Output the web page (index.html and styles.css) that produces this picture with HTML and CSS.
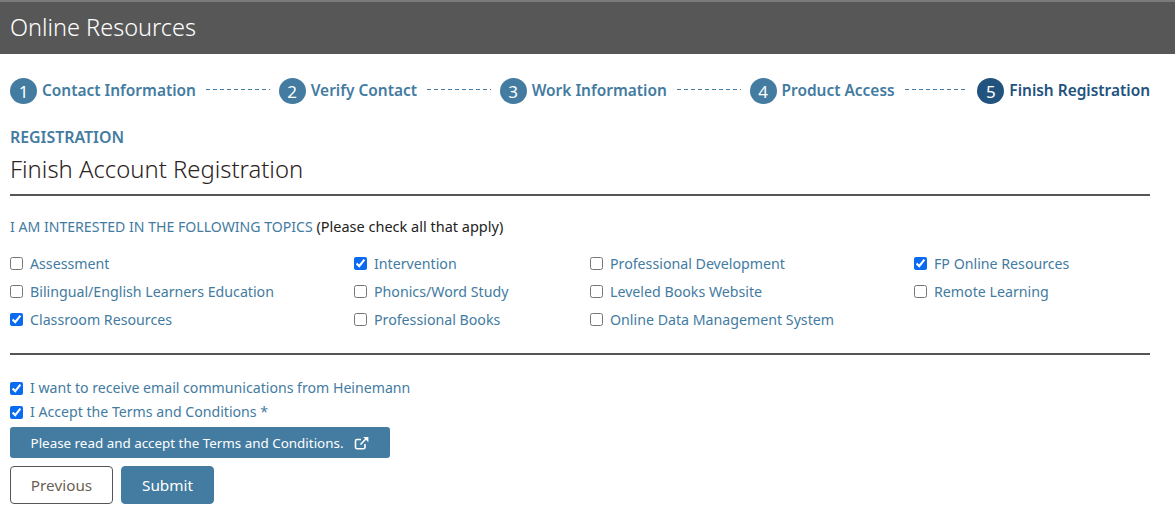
FILE: index.html
```html
<!DOCTYPE html>
<html lang="en">
<head>
<meta charset="utf-8">
<title>Online Resources</title>
<link rel="stylesheet" href="styles.css">
</head>
<body>
<header class="banner"><h1 class="banner-title">Online Resources</h1></header>
<main class="page">
  <ol class="steps">
    <li class="step"><span class="step-num">1</span><span class="step-label">Contact Information</span></li>
    <li class="dots"></li>
    <li class="step"><span class="step-num">2</span><span class="step-label">Verify Contact</span></li>
    <li class="dots"></li>
    <li class="step"><span class="step-num">3</span><span class="step-label">Work Information</span></li>
    <li class="dots"></li>
    <li class="step"><span class="step-num">4</span><span class="step-label">Product Access</span></li>
    <li class="dots"></li>
    <li class="step step-current"><span class="step-num">5</span><span class="step-label">Finish Registration</span></li>
  </ol>
  <div class="eyebrow">REGISTRATION</div>
  <h2 class="title">Finish Account Registration</h2>
  <p class="topics-head"><span class="topics-caps">I AM INTERESTED IN THE FOLLOWING TOPICS</span> (Please check all that apply)</p>
  <div class="topics">
    <label class="check"><input type="checkbox">Assessment</label>
    <label class="check"><input type="checkbox" checked>Intervention</label>
    <label class="check"><input type="checkbox">Professional Development</label>
    <label class="check"><input type="checkbox" checked>FP Online Resources</label>
    <label class="check"><input type="checkbox">Bilingual/English Learners Education</label>
    <label class="check"><input type="checkbox">Phonics/Word Study</label>
    <label class="check"><input type="checkbox">Leveled Books Website</label>
    <label class="check"><input type="checkbox">Remote Learning</label>
    <label class="check"><input type="checkbox" checked>Classroom Resources</label>
    <label class="check"><input type="checkbox">Professional Books</label>
    <label class="check"><input type="checkbox">Online Data Management System</label>
  </div>
  <div class="consent">
    <label class="check"><input type="checkbox" checked>I want to receive email communications from Heinemann</label>
    <label class="check"><input type="checkbox" checked>I Accept the Terms and Conditions *</label>
  </div>
  <a class="terms-btn" href="#">Please read and accept the Terms and Conditions.
    <svg class="ext-icon" width="15" height="14" viewBox="0 0 15 14" fill="none" stroke="#fff" stroke-width="1.6"><path d="M11 8v3.2a1.5 1.5 0 0 1-1.5 1.5H3a1.5 1.5 0 0 1-1.5-1.5V5A1.5 1.5 0 0 1 3 3.5h4"/><path d="M6.5 8.5 13 1.8"/><path d="M9.2 1H14.4v5.2z" fill="#fff" stroke="none"/></svg>
  </a>
  <div class="actions">
    <button class="btn btn-outline" type="button">Previous</button>
    <button class="btn btn-primary" type="button">Submit</button>
  </div>
</main>
</body>
</html>
```
FILE: styles.css
```css
* { box-sizing: border-box; }
html, body { margin: 0; padding: 0; background: #fff; }
body { font-family: "Noto Sans", "Open Sans", sans-serif; color: #222; overflow: hidden; }
.banner { height: 54px; background: #575757; border-top: 2px solid #7a7a7a; display: flex; align-items: center; padding: 0 10px; }
.banner-title { margin: 0; font-size: 23.5px; font-weight: 350; color: #fff; line-height: 1; }
.page { width: 1150px; padding: 0 0 0 10px; }
.steps { list-style: none; margin: 0; padding: 24px 0 0; display: flex; align-items: center; }
.step { display: flex; align-items: center; gap: 5px; flex: none; }
.step-num { width: 27px; height: 26px; border-radius: 50%; background: #437ba1; color: #fff; font-size: 17px; display: flex; align-items: center; justify-content: center; line-height: 1; }
.step-label { font-size: 15.45px; font-weight: 600; color: #437ba1; line-height: 22px; margin-top: -2px; }
.step-current .step-num { background: #22527e; }
.step-current .step-label { color: #22527e; }
.dots { flex: 1; height: 1px; margin: -3px 9px 0 10px; background: repeating-linear-gradient(to right, #437ba1 0 4px, transparent 4px 7px); }
.eyebrow { font-size: 15.9px; font-weight: 600; color: #437ba1; line-height: 22px; margin-top: 22px; }
.title { margin: 6px 0 0; font-size: 23.85px; font-weight: 350; color: #2b2222; line-height: 30px; padding-bottom: 10px; border-bottom: 2px solid #555; }
.topics-head { margin: 20px 0 0; font-size: 14.5px; line-height: 20px; color: #222; }
.topics-caps { color: #437ba1; font-size: 14.1px; }
.topics { display: grid; grid-template-columns: 344px 236px 324px 1fr; grid-auto-rows: 28px; margin-top: 12px; padding-bottom: 20px; border-bottom: 2px solid #555; }
.check { display: flex; align-items: center; font-size: 14.2px; color: #437ba1; }
.check input { width: 13px; height: 13px; margin: 0 7px 0 0; accent-color: #0b6bf0; flex: none; }
.consent { display: grid; grid-auto-rows: 24px; margin-top: 20px; }
.consent .check { font-size: 14.13px; }
.consent input { margin-top: 2px; }
.terms-btn { display: flex; align-items: center; justify-content: center; gap: 11px; width: 380px; height: 31px; margin-top: 4px; background: #437ba1; color: #fff; border-radius: 3px; font-size: 13.4px; text-decoration: none; }
.ext-icon { flex: none; }
.actions { display: flex; gap: 8px; margin-top: 8px; }
.btn { height: 38px; border-radius: 4px; font-family: inherit; font-size: 15.3px; padding: 0; }
.btn-outline { width: 103px; background: #fff; border: 1px solid #555; color: #6b5f55; }
.btn-primary { width: 93px; background: #437ba1; border: 1px solid #437ba1; color: #fff; }
```
